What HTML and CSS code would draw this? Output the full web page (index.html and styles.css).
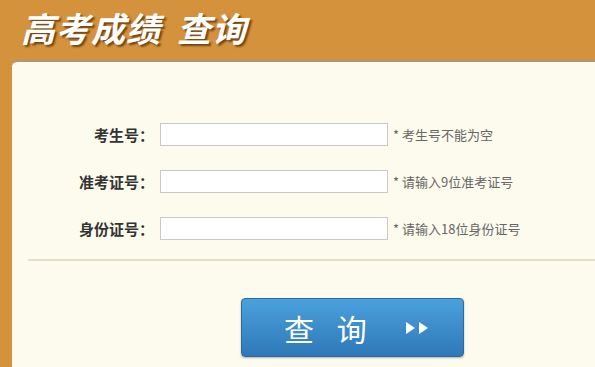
FILE: index.html
```html
<!DOCTYPE html>
<html lang="zh-CN">
<head>
    <meta charset="UTF-8">
    <meta name="viewport" content="width=device-width, initial-scale=1.0">
    <title>高考成绩查询</title>
    <link rel="stylesheet" href="styles.css">
</head>
<body>
    <h1 class="page-title">高考成绩<span class="title-gap"></span>查询</h1>
    <div class="panel">
        <form class="query-form">
            <label class="field-label" for="examineeNo">考生号：</label>
            <input class="field-input" type="text" id="examineeNo">
            <span class="field-hint">* 考生号不能为空</span>

            <label class="field-label" for="ticketNo">准考证号：</label>
            <input class="field-input" type="text" id="ticketNo">
            <span class="field-hint">* 请输入9位准考证号</span>

            <label class="field-label" for="idNo">身份证号：</label>
            <input class="field-input" type="text" id="idNo">
            <span class="field-hint">* 请输入18位身份证号</span>
        </form>
        <hr class="divider">
        <div class="actions">
            <button class="query-button" type="button">
                <span class="query-text">查 询</span>
                <svg class="query-arrows" width="26" height="14" viewBox="0 0 26 14">
                    <polygon points="1,1 10,7 1,13" fill="#fff"/>
                    <polygon points="14,1 23,7 14,13" fill="#fff"/>
                </svg>
            </button>
        </div>
    </div>
</body>
</html>
```

FILE: styles.css
```css
html, body {
    height: 100%;
}

body {
    margin: 0;
    background-color: #d5923d;
    font-family: "Noto Sans CJK SC", "Noto Sans", sans-serif;
    overflow: hidden;
}

.page-title {
    margin: 0;
    height: 60px;
    padding-left: 21px;
    line-height: 56px;
    font-size: 34px;
    font-weight: bold;
    font-style: italic;
    color: #fff;
    letter-spacing: 1px;
    text-shadow: 2px 2px 2px rgba(70, 35, 0, 0.7);
}

.title-gap {
    display: inline-block;
    width: 16px;
}

.panel {
    margin-left: 12px;
    height: calc(100% - 60px);
    background-color: #fdfbee;
    border-top: 2px solid #a99880;
    border-top-left-radius: 6px;
    box-sizing: border-box;
    padding-top: 61px;
}

.query-form {
    display: grid;
    grid-template-columns: 148px 228px auto;
    row-gap: 24px;
    align-items: center;
}

.field-label {
    text-align: right;
    font-size: 15px;
    font-weight: bold;
    color: #333;
    padding-right: 6px;
}

.field-input {
    width: 228px;
    height: 23px;
    box-sizing: border-box;
    border: 1px solid #c9c9c9;
    background-color: #fff;
    margin: 0;
}

.field-hint {
    padding-left: 5px;
    font-size: 13px;
    color: #666;
    white-space: nowrap;
}

.divider {
    margin: 19px 0 0 16px;
    border: none;
    border-top: 2px solid #e5e1c9;
}

.actions {
    padding: 37px 0 0 229px;
}

.query-button {
    width: 223px;
    height: 59px;
    display: flex;
    align-items: center;
    padding: 0 0 0 42px;
    border: 1px solid #2b6aa3;
    border-radius: 4px;
    background: linear-gradient(#4ba1dc, #2f78b8);
    box-shadow: 0 1px 2px rgba(0, 0, 0, 0.3);
    color: #fff;
    cursor: pointer;
}

.query-text {
    font-family: "Noto Sans CJK SC", sans-serif;
    font-size: 30px;
    line-height: 1;
    letter-spacing: 8px;
}

.query-arrows {
    margin-left: 30px;
}
```
